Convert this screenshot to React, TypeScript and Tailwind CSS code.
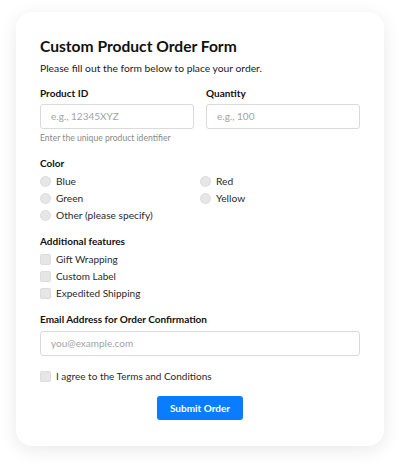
import React from 'react';

const colors = ['Blue', 'Red', 'Green', 'Yellow', 'Other (please specify)'];
const features = ['Gift Wrapping', 'Custom Label', 'Expedited Shipping'];

function Radio({ label }: { label: string }) {
    return (
        <label className="flex items-center gap-[5px] h-[17px] text-[10.2px] text-[#2a2a2a]">
            <span className="w-[11px] h-[11px] rounded-full bg-[#e6e6e6] border border-[#dcdcdc] shrink-0" />
            {label}
        </label>
    );
}

function Check({ label }: { label: string }) {
    return (
        <label className="flex items-center gap-[5px] h-[17px] text-[10px] text-[#2a2a2a]">
            <span className="w-[11px] h-[11px] rounded-[2px] bg-[#e6e6e6] border border-[#dcdcdc] shrink-0" />
            {label}
        </label>
    );
}

export default function App() {
    return (
        <div className="min-h-screen bg-white pt-3 px-4" style={{ fontFamily: 'Lato, sans-serif' }}>
            <div className="w-[368px] rounded-2xl bg-white px-6 pt-6 pb-[26px] shadow-[0_4px_18px_rgba(0,0,0,0.09)]">
                {/* Header */}
                <h1 className="text-[15.6px] leading-[20px] font-bold text-[#111]">Custom Product Order Form</h1>
                <p className="mt-1 text-[10.3px] leading-[16px] text-[#222]">
                    Please fill out the form below to place your order.
                </p>

                {/* Product ID / Quantity */}
                <div className="mt-[10px] grid grid-cols-2 gap-x-3">
                    <div>
                        <div className="text-[10px] leading-[14px] font-bold text-[#111]">Product ID</div>
                        <div className="mt-1 h-[25px] rounded-[3px] border border-[#dadada] px-[10px] flex items-center text-[10px] text-[#a3a3a3]">
                            e.g., 12345XYZ
                        </div>
                        <div className="mt-[3px] text-[8.6px] leading-[12px] text-[#8a8a8a]">
                            Enter the unique product identifier
                        </div>
                    </div>
                    <div>
                        <div className="text-[10px] leading-[14px] font-bold text-[#111]">Quantity</div>
                        <div className="mt-1 h-[25px] rounded-[3px] border border-[#dadada] px-[10px] flex items-center text-[10px] text-[#a3a3a3]">
                            e.g., 100
                        </div>
                    </div>
                </div>

                {/* Color */}
                <div className="mt-3 text-[10px] leading-[14px] font-bold text-[#111]">Color</div>
                <div className="mt-[3px] grid grid-cols-2">
                    {colors.map(c => (
                        <Radio key={c} label={c} />
                    ))}
                </div>

                {/* Features */}
                <div className="mt-[10px] text-[10px] leading-[14px] font-bold text-[#111]">Additional features</div>
                <div className="mt-[3px] flex flex-col">
                    {features.map(f => (
                        <Check key={f} label={f} />
                    ))}
                </div>

                {/* Email */}
                <div className="mt-[10px] text-[10px] leading-[14px] font-bold text-[#111]">
                    Email Address for Order Confirmation
                </div>
                <div className="mt-[5px] h-[25px] rounded-[3px] border border-[#dadada] px-[10px] flex items-center text-[10px] text-[#a3a3a3]">
                    you@example.com
                </div>

                <div className="mt-[12px]">
                    <Check label="I agree to the Terms and Conditions" />
                </div>

                <div className="mt-[11px] flex justify-center">
                    <button className="h-[24px] w-[86px] rounded-[3px] bg-[#0a7cff] text-[10px] font-bold text-white">
                        Submit Order
                    </button>
                </div>
            </div>
        </div>
    );
}
